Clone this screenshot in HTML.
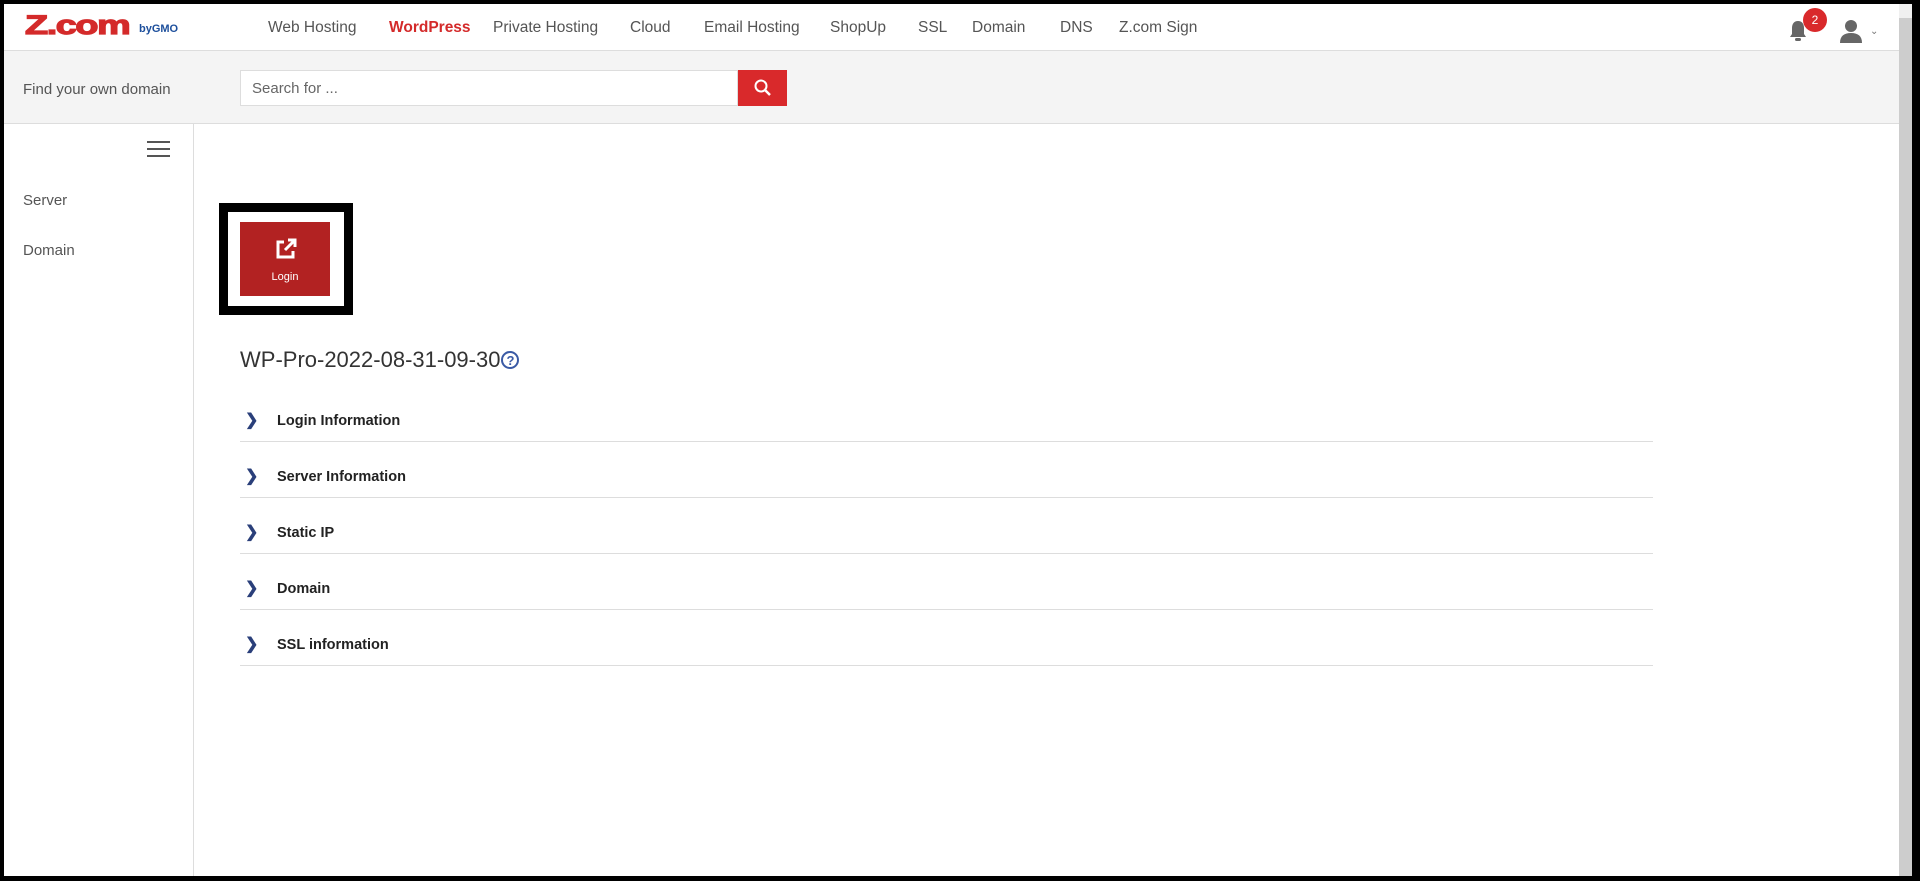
<!DOCTYPE html>
<html><head><meta charset="utf-8"><style>
*{box-sizing:border-box;margin:0;padding:0}
body{width:1920px;height:881px;background:#000;font-family:"Liberation Sans",sans-serif;position:relative;overflow:hidden}
.page{position:absolute;left:4px;top:4px;width:1895px;height:872px;background:#fff}
.sb{position:absolute;left:1899px;top:4px;width:13px;height:872px;background:#f0f0f0}
.sb div{position:absolute;left:0;top:14px;width:13px;height:858px;background:#cdcdcd}
.hdr{position:absolute;left:0;top:0;width:1895px;height:47px;border-bottom:1px solid #ddd;background:#fff}
.logo{position:absolute;left:21px;top:6px;font-weight:bold;font-size:27px;color:#d42a2a;transform:scaleX(1.4);transform-origin:left top;letter-spacing:-1px;-webkit-text-stroke:1.2px #d42a2a}
.logo2{position:absolute;left:135px;top:19px;font-size:11px;font-weight:bold;color:#1d4f9c}
.nav{position:absolute;top:15px;font-size:15.5px;color:#555}
.band{position:absolute;left:0;top:47px;width:1895px;height:73px;background:#f4f4f4;border-bottom:1px solid #ddd}
.band .lbl{position:absolute;left:19px;top:30px;font-size:15px;color:#555}
.inp{position:absolute;left:236px;top:19px;width:498px;height:36px;background:#fff;border:1px solid #ddd;font-size:15px;color:#666;padding:9px 11px}
.btn{position:absolute;left:734px;top:19px;width:49px;height:36px;background:#d9292b}
.side{position:absolute;left:0;top:120px;width:190px;height:752px;border-right:1px solid #ddd}
.side .it{position:absolute;left:19px;font-size:15px;color:#555}
.ham{position:absolute;left:143px;top:17px;width:23px}
.ham i{display:block;height:2px;background:#555;margin-bottom:5px}
.box{position:absolute;left:215px;top:199px;width:134px;height:112px;border:9px solid #000}
.red{position:absolute;left:236px;top:218px;width:90px;height:74px;background:#b22222;color:#fff;text-align:center}
.red span{position:absolute;left:0;right:0;top:49px;font-size:11px}
.title{position:absolute;left:236px;top:343px;font-size:22px;color:#333}
.q{display:inline-block;width:18px;height:18px;border:2px solid #3a5aa5;border-radius:50%;color:#3a5aa5;font-size:13px;font-weight:bold;text-align:center;line-height:15px;vertical-align:2px;margin-left:1px}
.row{position:absolute;left:236px;width:1413px;height:56px;border-bottom:1px solid #ddd}
.row b{position:absolute;left:37px;bottom:12px;font-size:14.5px;color:#222}
.row i{position:absolute;left:5px;bottom:11px;font-style:normal;font-weight:bold;font-size:16px;color:#2a3f7a}
</style></head><body>
<div class="page">
<div class="hdr">
<div class="logo">Z.com</div><div class="logo2">byGMO</div>
<div class="nav" style="left:264px">Web Hosting</div>
<div class="nav" style="left:385px;color:#d42a2a;font-weight:bold">WordPress</div>
<div class="nav" style="left:489px">Private Hosting</div>
<div class="nav" style="left:626px">Cloud</div>
<div class="nav" style="left:700px">Email Hosting</div>
<div class="nav" style="left:826px">ShopUp</div>
<div class="nav" style="left:914px">SSL</div>
<div class="nav" style="left:968px">Domain</div>
<div class="nav" style="left:1056px">DNS</div>
<div class="nav" style="left:1115px">Z.com Sign</div>
<svg style="position:absolute;left:1784px;top:15px" width="20" height="24" viewBox="0 0 20 24"><path d="M10 2c-4 0-6 3-6 7v6l-2 3h16l-2-3V9c0-4-2-7-6-7z" fill="#666"/><rect x="7" y="19" width="6" height="3" rx="1.5" fill="#666"/></svg>
<div style="position:absolute;left:1799px;top:4px;width:24px;height:24px;border-radius:50%;background:#d9292b;color:#fff;font-size:12px;text-align:center;line-height:24px">2</div>
<svg style="position:absolute;left:1836px;top:15px" width="22" height="24" viewBox="0 0 22 24"><circle cx="11" cy="7" r="6" fill="#666"/><path d="M0 24c0-7 4-10 11-10s11 3 11 10z" fill="#666"/></svg>
<div style="position:absolute;left:1866px;top:22px;font-size:10px;color:#777">&#8964;</div>
</div>
<div class="band"><div class="lbl">Find your own domain</div>
<div class="inp">Search for ...</div>
<div class="btn"><svg width="49" height="36" viewBox="0 0 49 36"><circle cx="23" cy="16" r="5.5" stroke="#fff" stroke-width="2" fill="none"/><path d="M27 20l5 5" stroke="#fff" stroke-width="2.5"/></svg></div></div>
<div class="side"><div class="ham"><i></i><i></i><i></i></div>
<div class="it" style="top:68px">Server</div><div class="it" style="top:118px">Domain</div></div>
<div class="box"></div>
<div class="red"><svg style="position:absolute;left:34px;top:15px" width="24" height="24" viewBox="0 0 24 24"><path d="M10 5H4v15h15v-6" stroke="#fff" stroke-width="3" fill="none"/><path d="M11 13L20 4M14 3h7v7" stroke="#fff" stroke-width="3" fill="none"/></svg><span>Login</span></div>
<div class="title">WP-Pro-2022-08-31-09-30<span class="q">?</span></div>
<div class="row" style="top:382px"><i>❯</i><b>Login Information</b></div>
<div class="row" style="top:438px"><i>❯</i><b>Server Information</b></div>
<div class="row" style="top:494px"><i>❯</i><b>Static IP</b></div>
<div class="row" style="top:550px"><i>❯</i><b>Domain</b></div>
<div class="row" style="top:606px"><i>❯</i><b>SSL information</b></div>
</div>
<div class="sb"><div></div></div>
</body></html>
